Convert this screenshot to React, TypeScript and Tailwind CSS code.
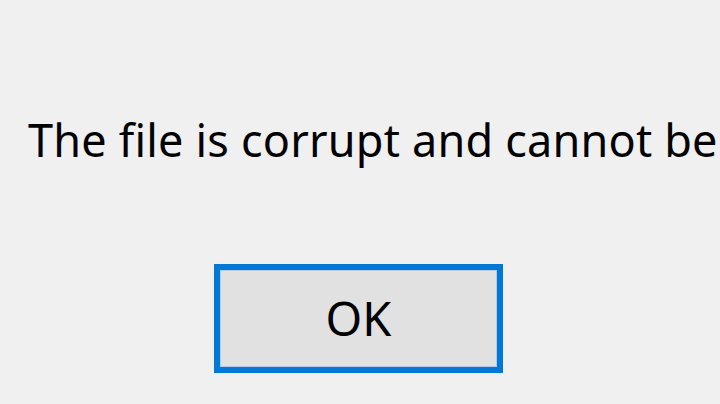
export default function App() {
  return (
    <div className="w-[720px] h-[404px] bg-[#f0f0f0] overflow-hidden flex flex-col font-['Noto_Sans',sans-serif] text-black">
      {/* Message */}
      <div className="pt-[112px] pl-[28px] whitespace-nowrap text-[45px] leading-[56px] tracking-[0.2px]">
        The file is corrupt and cannot be
      </div>

      {/* OK button (focused) */}
      <div className="pt-[96px] pl-[214px]">
        <button className="w-[289px] h-[109px] border-[6px] border-[#0078d7] bg-[#e1e1e1] p-0">
          <div className="w-full h-full border border-[#b4cbe6] flex items-center justify-center text-[47px] leading-none">
            OK
          </div>
        </button>
      </div>
    </div>
  );
}
